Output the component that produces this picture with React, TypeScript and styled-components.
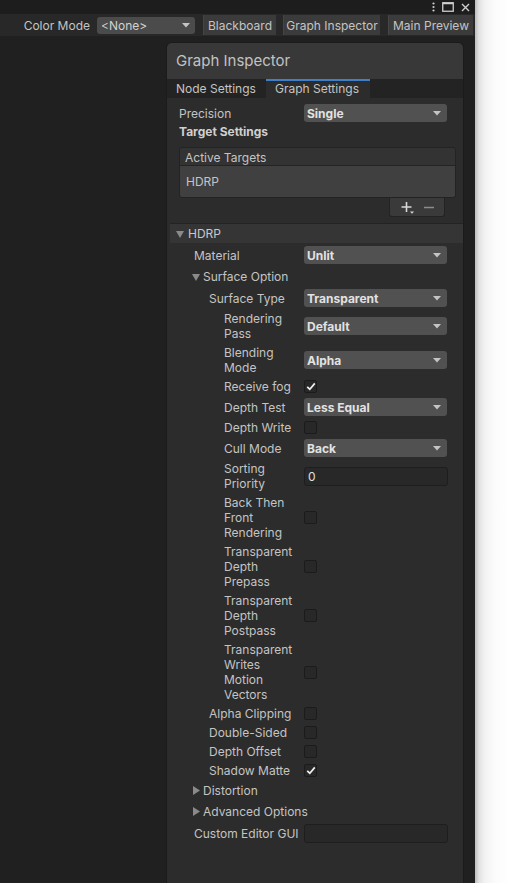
import React from "react";
import styled, { createGlobalStyle } from "styled-components";

const Global = createGlobalStyle`
  html, body { margin: 0; padding: 0; background: #ffffff; }
  body { font-family: Inter, "Noto Sans", sans-serif; font-size: 12px; color: #c4c4c4; }
  * { box-sizing: border-box; }
`;

const Screen = styled.div`
  display: flex;
  width: 509px;
  height: 883px;
  overflow: hidden;
`;

const Window = styled.div`
  width: 475px;
  flex: 0 0 475px;
  background: #202020;
  display: flex;
  flex-direction: column;
`;

const Shade = styled.div`
  flex: 1;
  background: linear-gradient(to right, #bdbdbd 0px, #e2e2e2 4px, #f3f3f3 10px, #fbfbfb 20px, #ffffff 34px);
`;

const TitleBar = styled.div`
  height: 14px;
  background: #1d1d1d;
  display: flex;
  justify-content: flex-end;
  align-items: center;
  gap: 7px;
  padding-right: 5px;
  color: #cfcfcf;
`;

const Toolbar = styled.div`
  height: 22px;
  background: #282828;
  display: flex;
  align-items: center;
  justify-content: flex-end;
  padding-right: 2px;
`;

const ToolLabel = styled.span`
  color: #c4c4c4;
  font-size: 12px;
  margin-right: 7px;
`;

const ToolDropdown = styled.div`
  width: 98px;
  height: 17px;
  background: #4b4b4b;
  border-radius: 3px;
  display: flex;
  align-items: center;
  justify-content: space-between;
  padding: 0 5px 0 4px;
  color: #d2d2d2;
`;

const ToolButton = styled.div<{ $w: number; $gap: number }>`
  width: ${(p) => p.$w}px;
  height: 20px;
  background: #3b3b3b;
  display: flex;
  align-items: center;
  justify-content: center;
  color: #c4c4c4;
  border-left: 1px solid #454545;
  margin-left: ${(p) => p.$gap}px;
`;

const Canvas = styled.div`
  flex: 1;
  display: flex;
  padding: 6px 0 0 166px;
  min-height: 0;
`;

const Panel = styled.div`
  width: 298px;
  background: #2c2c2c;
  border: 1px solid #1b1b1b;
  border-bottom: none;
  border-radius: 6px 6px 0 0;
  display: flex;
  flex-direction: column;
  position: relative;
  overflow: hidden;
`;

const PanelHeader = styled.div`
  height: 36px;
  background: #383838;
  display: flex;
  align-items: center;
  padding-left: 9px;
  padding-bottom: 2px;
  font-size: 15px;
  color: #c2c2c2;
`;

const Tabs = styled.div`
  height: 19px;
  background: #232323;
  display: flex;
`;

const Tab = styled.div<{ $active?: boolean; $w: number }>`
  width: ${(p) => p.$w}px;
  padding-left: 9px;
  display: flex;
  align-items: center;
  color: #c4c4c4;
  background: ${(p) => (p.$active ? "#2c2c2c" : "transparent")};
  border-top: 2px solid ${(p) => (p.$active ? "#3d7fc9" : "transparent")};
  padding-bottom: 2px;
`;

const Body = styled.div`
  padding-top: 4px;
  display: flex;
  flex-direction: column;
`;

const Row = styled.div<{ $indent: number }>`
  display: flex;
  align-items: center;
  padding: 2px 0 2px ${(p) => p.$indent}px;
`;

const Label = styled.div<{ $w: number }>`
  flex: 0 0 ${(p) => p.$w}px;
  width: ${(p) => p.$w}px;
  padding-right: 4px;
  line-height: 15px;
  color: #c4c4c4;
`;

const Dropdown = styled.div`
  width: 143px;
  height: 18px;
  background: #515151;
  border-radius: 3px;
  display: flex;
  align-items: center;
  justify-content: space-between;
  padding: 0 6px 0 3px;
  color: #e2e2e2;
  font-weight: 700;
`;

const TextField = styled.div`
  width: 144px;
  height: 19px;
  background: #282828;
  border: 1px solid #1e1e1e;
  border-radius: 3px;
  display: flex;
  align-items: center;
  padding-left: 3px;
  color: #e0e0e0;
`;

const Check = styled.div`
  width: 13px;
  height: 13px;
  background: #282828;
  border: 1px solid #1b1b1b;
  border-radius: 2px;
  display: flex;
  align-items: center;
  justify-content: center;
`;

const SectionTitle = styled.div`
  padding: 0 0 0 12px;
  height: 16px;
  line-height: 15px;
  font-weight: 700;
  color: #d0d0d0;
`;

const TargetBox = styled.div`
  margin: 7px 0 0 12px;
  width: 277px;
  border: 1px solid #232323;
  border-radius: 3px;
  overflow: hidden;
`;

const TargetHeader = styled.div`
  height: 18px;
  background: #333333;
  border-bottom: 1px solid #242424;
  padding-left: 5px;
  padding-top: 1px;
  display: flex;
  align-items: center;
`;

const TargetItem = styled.div`
  height: 31px;
  background: #404040;
  padding-left: 6px;
  display: flex;
  align-items: center;
`;

const TargetFooter = styled.div`
  align-self: flex-start;
  margin-left: 222px;
  width: 56px;
  height: 19px;
  background: #3a3a3a;
  border: 1px solid #232323;
  border-top: none;
  border-radius: 0 0 3px 3px;
  display: flex;
  align-items: center;
  justify-content: space-around;
  padding: 0 6px;
`;

const Group = styled.div`
  display: flex;
  flex-direction: column;
`;

const GroupHeader = styled.div`
  margin: 6px 0 1px 3px;
  height: 20px;
  background: #353535;
  border-top: 1px solid #232323;
  display: flex;
  align-items: center;
  padding-left: 6px;
  gap: 4px;
  color: #c8c8c8;
`;

const Foldout = styled.div<{ $indent: number }>`
  height: 21px;
  display: flex;
  align-items: center;
  padding-left: ${(p) => p.$indent}px;
  gap: 3px;
  color: #c4c4c4;
`;

const Scroll = styled.div`
  position: absolute;
  right: -1px;
  bottom: 0;
  width: 1px;
  height: 38px;
  background: #4a4a4a;
`;

const Arrow = () => (
  <svg width="8" height="5" viewBox="0 0 8 5">
    <path d="M0 0 L8 0 L4 4.5 Z" fill="#c4c4c4" />
  </svg>
);

const Tri = ({ open }: { open: boolean }) =>
  open ? (
    <svg width="8" height="8" viewBox="0 0 8 8">
      <path d="M0 1 L8 1 L4 8 Z" fill="#8a8a8a" />
    </svg>
  ) : (
    <svg width="8" height="9" viewBox="0 0 8 9">
      <path d="M1 0 L8 4.5 L1 9 Z" fill="#8a8a8a" />
    </svg>
  );

const CheckMark = () => (
  <svg width="10" height="9" viewBox="0 0 10 9">
    <path d="M1.2 4.8 L3.8 7.2 L8.8 1.4" stroke="#f0f0f0" strokeWidth="1.7" fill="none" />
  </svg>
);

const FIELD_X = 304;
const BASE = 167;

type Item =
  | { kind: "drop"; x: number; label: string; value: string }
  | { kind: "check"; x: number; label: string; on?: boolean }
  | { kind: "text"; x: number; label: string; value: string }
  | { kind: "fold"; x: number; label: string; open: boolean };

const items: Item[] = [
  { kind: "drop", x: 194, label: "Material", value: "Unlit" },
  { kind: "fold", x: 192, label: "Surface Option", open: true },
  { kind: "drop", x: 209, label: "Surface Type", value: "Transparent" },
  { kind: "drop", x: 224, label: "Rendering Pass", value: "Default" },
  { kind: "drop", x: 224, label: "Blending Mode", value: "Alpha" },
  { kind: "check", x: 224, label: "Receive fog", on: true },
  { kind: "drop", x: 224, label: "Depth Test", value: "Less Equal" },
  { kind: "check", x: 224, label: "Depth Write" },
  { kind: "drop", x: 224, label: "Cull Mode", value: "Back" },
  { kind: "text", x: 224, label: "Sorting Priority", value: "0" },
  { kind: "check", x: 224, label: "Back Then Front Rendering" },
  { kind: "check", x: 224, label: "Transparent Depth Prepass" },
  { kind: "check", x: 224, label: "Transparent Depth Postpass" },
  { kind: "check", x: 224, label: "Transparent Writes Motion Vectors" },
  { kind: "check", x: 209, label: "Alpha Clipping" },
  { kind: "check", x: 209, label: "Double-Sided" },
  { kind: "check", x: 209, label: "Depth Offset" },
  { kind: "check", x: 209, label: "Shadow Matte", on: true },
  { kind: "fold", x: 192, label: "Distortion", open: false },
  { kind: "fold", x: 192, label: "Advanced Options", open: false },
  { kind: "text", x: 194, label: "Custom Editor GUI", value: "" },
];

const renderItem = (it: Item, i: number) => {
  if (it.kind === "fold") {
    return (
      <Foldout key={i} $indent={it.x - BASE}>
        <Tri open={it.open} />
        <span>{it.label}</span>
      </Foldout>
    );
  }
  const w = FIELD_X - it.x;
  return (
    <Row key={i} $indent={it.x - BASE}>
      <Label $w={w}>{it.label}</Label>
      {it.kind === "drop" && (
        <Dropdown>
          <span>{it.value}</span>
          <Arrow />
        </Dropdown>
      )}
      {it.kind === "check" && <Check>{it.on && <CheckMark />}</Check>}
      {it.kind === "text" && <TextField>{it.value}</TextField>}
    </Row>
  );
};

export default function App() {
  return (
    <>
      <Global />
      <Screen>
        <Window>
          <TitleBar>
            <svg width="3" height="10" viewBox="0 0 3 10">
              <circle cx="1.5" cy="1.5" r="1.1" fill="#cfcfcf" />
              <circle cx="1.5" cy="5" r="1.1" fill="#cfcfcf" />
              <circle cx="1.5" cy="8.5" r="1.1" fill="#cfcfcf" />
            </svg>
            <svg width="12" height="10" viewBox="0 0 12 10">
              <rect x="0.75" y="0.75" width="10.5" height="8.5" fill="none" stroke="#cfcfcf" strokeWidth="1.3" />
              <line x1="0.75" y1="1.5" x2="11.25" y2="1.5" stroke="#cfcfcf" strokeWidth="1.5" />
            </svg>
            <svg width="9" height="9" viewBox="0 0 9 9">
              <path d="M1 1 L8 8 M8 1 L1 8" stroke="#cfcfcf" strokeWidth="1.4" />
            </svg>
          </TitleBar>
          <Toolbar>
            <ToolLabel>Color Mode</ToolLabel>
            <ToolDropdown>
              <span>&lt;None&gt;</span>
              <Arrow />
            </ToolDropdown>
            <ToolButton $w={73} $gap={8}>Blackboard</ToolButton>
            <ToolButton $w={97} $gap={7}>Graph Inspector</ToolButton>
            <ToolButton $w={85} $gap={8}>Main Preview</ToolButton>
          </Toolbar>
          <Canvas>
            <Panel>
              <PanelHeader>Graph Inspector</PanelHeader>
              <Tabs>
                <Tab $w={99}>Node Settings</Tab>
                <Tab $w={104} $active>
                  Graph Settings
                </Tab>
              </Tabs>
              <Body>
                <Row $indent={12}>
                  <Label $w={125}>Precision</Label>
                  <Dropdown>
                    <span>Single</span>
                    <Arrow />
                  </Dropdown>
                </Row>
                <SectionTitle>Target Settings</SectionTitle>
                <TargetBox>
                  <TargetHeader>Active Targets</TargetHeader>
                  <TargetItem>HDRP</TargetItem>
                </TargetBox>
                <TargetFooter>
                  <svg width="14" height="13" viewBox="0 0 14 13">
                    <path d="M5.5 1 V11 M0.5 6 H10.5" stroke="#d8d8d8" strokeWidth="1.6" />
                    <path d="M9 10.5 H13 L11 12.8 Z" fill="#d8d8d8" />
                  </svg>
                  <svg width="10" height="3" viewBox="0 0 10 3">
                    <path d="M0 1.5 H10" stroke="#8c8c8c" strokeWidth="1.5" />
                  </svg>
                </TargetFooter>
                <Group>
                  <GroupHeader>
                    <Tri open />
                    <span>HDRP</span>
                  </GroupHeader>
                  {items.map(renderItem)}
                </Group>
              </Body>
              <Scroll />
            </Panel>
          </Canvas>
        </Window>
        <Shade />
      </Screen>
    </>
  );
}
